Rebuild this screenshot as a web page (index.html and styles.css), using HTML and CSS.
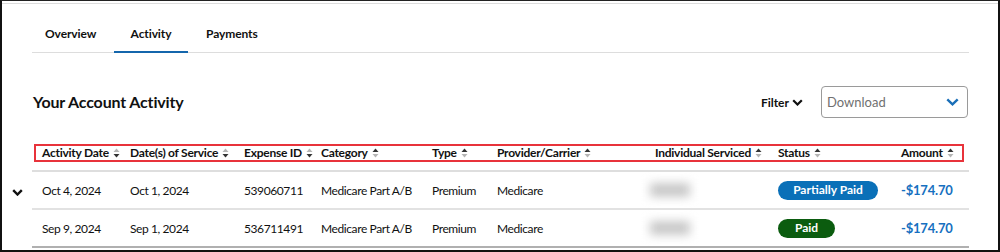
FILE: index.html
```html
<!DOCTYPE html>
<html lang="en">
<head>
<meta charset="utf-8">
<title>Account Activity</title>
<link rel="stylesheet" href="styles.css">
</head>
<body>
<div class="frame">
  <div class="page">
    <nav class="tabs">
      <div class="tab tab-first">Overview</div>
      <div class="tab tab-active">Activity</div>
      <div class="tab tab-last">Payments</div>
    </nav>

    <div class="title-row">
      <h1 class="title">Your Account Activity</h1>
      <div class="tools">
        <div class="filter">Filter
          <svg class="filter-chev" width="11" height="7" viewBox="0 0 11 7"><path d="M1.2 1.2 L5.5 5.5 L9.8 1.2" fill="none" stroke="#111" stroke-width="2.2"/></svg>
        </div>
        <div class="select">
          <span class="select-text">Download</span>
          <svg class="select-chev" width="13" height="8" viewBox="0 0 13 8"><path d="M1.3 1.3 L6.5 6.3 L11.7 1.3" fill="none" stroke="#1a6fb8" stroke-width="2.4"/></svg>
        </div>
      </div>
    </div>

    <div class="thead">
      <div class="thead-box">
        <div class="th">Activity Date <svg class="sort" width="7" height="10" viewBox="0 0 7 10"><path d="M0.5 4 L3.5 0.5 L6.5 4 Z" fill="#b5b5b5"/><path d="M0.5 6 L3.5 9.5 L6.5 6 Z" fill="#333"/></svg></div>
        <div class="th">Date(s) of Service <svg class="sort" width="7" height="10" viewBox="0 0 7 10"><path d="M0.5 4 L3.5 0.5 L6.5 4 Z" fill="#b5b5b5"/><path d="M0.5 6 L3.5 9.5 L6.5 6 Z" fill="#333"/></svg></div>
        <div class="th">Expense ID <svg class="sort" width="7" height="10" viewBox="0 0 7 10"><path d="M0.5 4 L3.5 0.5 L6.5 4 Z" fill="#b5b5b5"/><path d="M0.5 6 L3.5 9.5 L6.5 6 Z" fill="#333"/></svg></div>
        <div class="th">Category <svg class="sort" width="7" height="10" viewBox="0 0 7 10"><path d="M0.5 4 L3.5 0.5 L6.5 4 Z" fill="#333"/><path d="M0.5 6 L3.5 9.5 L6.5 6 Z" fill="#b5b5b5"/></svg></div>
        <div class="th">Type <svg class="sort" width="7" height="10" viewBox="0 0 7 10"><path d="M0.5 4 L3.5 0.5 L6.5 4 Z" fill="#333"/><path d="M0.5 6 L3.5 9.5 L6.5 6 Z" fill="#b5b5b5"/></svg></div>
        <div class="th">Provider/Carrier <svg class="sort" width="7" height="10" viewBox="0 0 7 10"><path d="M0.5 4 L3.5 0.5 L6.5 4 Z" fill="#333"/><path d="M0.5 6 L3.5 9.5 L6.5 6 Z" fill="#b5b5b5"/></svg></div>
        <div class="th">Individual Serviced <svg class="sort" width="7" height="10" viewBox="0 0 7 10"><path d="M0.5 4 L3.5 0.5 L6.5 4 Z" fill="#333"/><path d="M0.5 6 L3.5 9.5 L6.5 6 Z" fill="#b5b5b5"/></svg></div>
        <div class="th">Status <svg class="sort" width="7" height="10" viewBox="0 0 7 10"><path d="M0.5 4 L3.5 0.5 L6.5 4 Z" fill="#333"/><path d="M0.5 6 L3.5 9.5 L6.5 6 Z" fill="#b5b5b5"/></svg></div>
        <div class="th">Amount <svg class="sort" width="7" height="10" viewBox="0 0 7 10"><path d="M0.5 4 L3.5 0.5 L6.5 4 Z" fill="#333"/><path d="M0.5 6 L3.5 9.5 L6.5 6 Z" fill="#b5b5b5"/></svg></div>
      </div>
    </div>

    <div class="row">
      <div class="toggle"><svg width="11" height="7" viewBox="0 0 11 7"><path d="M1.2 1.2 L5.5 5.5 L9.8 1.2" fill="none" stroke="#111" stroke-width="2.4"/></svg></div>
      <div class="td td-first">Oct 4, 2024</div>
      <div class="td">Oct 1, 2024</div>
      <div class="td">539060711</div>
      <div class="td">Medicare Part A/B</div>
      <div class="td">Premium</div>
      <div class="td">Medicare</div>
      <div class="td"><span class="blur"></span></div>
      <div class="td"><span class="badge badge-blue">Partially Paid</span></div>
      <div class="td amount">-$174.70</div>
    </div>

    <div class="row row-last">
      <div class="toggle"></div>
      <div class="td td-first">Sep 9, 2024</div>
      <div class="td">Sep 1, 2024</div>
      <div class="td">536711491</div>
      <div class="td">Medicare Part A/B</div>
      <div class="td">Premium</div>
      <div class="td">Medicare</div>
      <div class="td"><span class="blur"></span></div>
      <div class="td"><span class="badge badge-green">Paid</span></div>
      <div class="td amount">-$174.70</div>
    </div>
  </div>
</div>
</body>
</html>
```

FILE: styles.css
```css
* { box-sizing: border-box; }

html, body {
  margin: 0;
  padding: 0;
  background: #fff;
}

body {
  font-family: Lato, "Open Sans", "Liberation Sans", sans-serif;
  color: #111;
  font-size: 12px;
}

.frame {
  width: 1000px;
  height: 252px;
  border-top: 1px solid #222;
  border-left: 2px solid #111;
  border-right: 2px solid #111;
  border-bottom: 2px solid #111;
  overflow: hidden;
}

.page {
  margin-top: 2px;
  border-top: 1px solid #dcdcdc;
}

/* Tabs */
.tabs {
  display: flex;
  margin: 0 29px 0 30px;
  border-bottom: 1px solid #dddddd;
}

.tab {
  font-weight: 700;
  font-size: 12px;
  line-height: 16px;
  padding: 22px 0 9px;
  border-bottom: 2px solid transparent;
  margin-bottom: -1px;
  color: #111;
  letter-spacing: -0.1px;
}

.tab-first {
  width: 82px;
  padding-left: 13px;
}

.tab-active {
  width: 74px;
  text-align: center;
  border-bottom-color: #1466ac;
}

.tab-last {
  padding-left: 18px;
}

/* Title row */
.title-row {
  display: flex;
  align-items: center;
  justify-content: space-between;
  height: 32px;
  margin: 33px 30px 0 31px;
}

.title {
  margin: 0;
  font-size: 16px;
  font-weight: 700;
  line-height: 20px;
  color: #111;
  letter-spacing: -0.15px;
}

.tools {
  display: flex;
  align-items: center;
}

.filter {
  display: flex;
  align-items: center;
  font-weight: 700;
  font-size: 12px;
  gap: 3px;
  margin-right: 18px;
  color: #111;
}

.select {
  width: 147px;
  height: 32px;
  border: 1px solid #9a9a9a;
  border-radius: 4px;
  display: flex;
  align-items: center;
  justify-content: space-between;
  padding: 0 8px 0 5px;
}

.select-text {
  font-size: 13px;
  color: #707070;
}

/* Table header */
.thead {
  margin: 26px 29px 0 30px;
  padding-bottom: 8px;
  border-bottom: 2px solid #dedede;
}

.thead-box {
  margin: 0 5px 0 2px;
  border: 2px solid #e8333b;
  display: grid;
  grid-template-columns: 94px 114px 77px 111px 65px 158px 123px 123px 1fr;
  height: 18px;
  align-items: center;
}

.th {
  font-weight: 700;
  font-size: 12px;
  line-height: 14px;
  display: flex;
  align-items: center;
  white-space: nowrap;
  color: #111;
  letter-spacing: -0.25px;
}

.th:first-child {
  padding-left: 6px;
}

.sort {
  margin-left: 4px;
}

/* Rows */
.row {
  display: grid;
  grid-template-columns: 30px 98px 114px 77px 111px 65px 158px 123px 123px 1fr;
  margin-right: 29px;
  height: 38px;
}

.toggle {
  display: flex;
  align-items: center;
  justify-content: center;
  padding-top: 2px;
}

.td {
  display: flex;
  align-items: center;
  border-bottom: 2px solid #e2e2e2;
  font-size: 12px;
  white-space: nowrap;
  color: #111;
  letter-spacing: -0.4px;
}

.td-first {
  padding-left: 10px;
}

.row-last .td {
  border-bottom-color: #b0b0b0;
}

.blur {
  display: inline-block;
  width: 40px;
  height: 14px;
  margin-left: -5px;
  background: #c9c9c9;
  filter: blur(5px);
}

.badge {
  display: inline-flex;
  align-items: center;
  justify-content: center;
  height: 19px;
  border-radius: 10px;
  color: #fff;
  font-weight: 700;
  font-size: 12px;
  padding-bottom: 1px;
  letter-spacing: 0;
}

.badge-blue {
  width: 100px;
  background: #0a70b8;
}

.badge-green {
  width: 57px;
  background: #0b5c0f;
}

.amount {
  color: #1670c0;
  font-weight: 700;
  font-size: 13px;
  letter-spacing: -0.2px;
}
```
